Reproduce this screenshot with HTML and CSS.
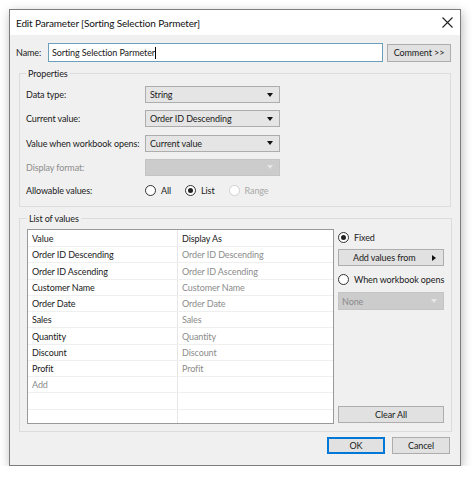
FILE: index.html
```html
<!DOCTYPE html>
<html lang="en">
<head>
  <meta charset="UTF-8">
  <title>Edit Parameter</title>
  <link rel="stylesheet" href="styles.css">
</head>
<body>
  <div class="window">
    <div class="titlebar">
      <span class="title">Edit Parameter [Sorting Selection Parmeter]</span>
      <svg class="close" width="11" height="11" viewBox="0 0 11 11">
        <path d="M0.5 0.5 L10.5 10.5 M10.5 0.5 L0.5 10.5" stroke="#222" stroke-width="1.1" fill="none"/>
      </svg>
    </div>

    <div class="body">
      <div class="name-row">
        <span class="name-label">Name:</span>
        <div class="name-input">Sorting Selection Parmeter<span class="caret"></span></div>
        <button class="btn comment-btn">Comment &gt;&gt;</button>
      </div>

      <fieldset class="group props">
        <legend>Properties</legend>
        <div class="prop-grid">
          <span class="lbl">Data type:</span>
          <div class="combo">String<i class="arrow"></i></div>

          <span class="lbl">Current value:</span>
          <div class="combo">Order ID Descending<i class="arrow"></i></div>

          <span class="lbl">Value when workbook opens:</span>
          <div class="combo">Current value<i class="arrow"></i></div>

          <span class="lbl disabled">Display format:</span>
          <div class="combo off"><i class="arrow"></i></div>

          <span class="lbl">Allowable values:</span>
          <div class="radios">
            <span class="radio"><i class="dot"></i>All</span>
            <span class="radio checked"><i class="dot"></i>List</span>
            <span class="radio off"><i class="dot"></i>Range</span>
          </div>
        </div>
      </fieldset>

      <fieldset class="group values">
        <legend>List of values</legend>
        <div class="values-body">
          <div class="table">
            <div class="row head"><span>Value</span><span>Display As</span></div>
            <div class="row"><span>Order ID Descending</span><span>Order ID Descending</span></div>
            <div class="row"><span>Order ID Ascending</span><span>Order ID Ascending</span></div>
            <div class="row"><span>Customer Name</span><span>Customer Name</span></div>
            <div class="row"><span>Order Date</span><span>Order Date</span></div>
            <div class="row"><span>Sales</span><span>Sales</span></div>
            <div class="row"><span>Quantity</span><span>Quantity</span></div>
            <div class="row"><span>Discount</span><span>Discount</span></div>
            <div class="row"><span>Profit</span><span>Profit</span></div>
            <div class="row add"><span>Add</span><span></span></div>
            <div class="row"><span></span><span></span></div>
            <div class="row last"><span></span><span></span></div>
          </div>

          <div class="side">
            <span class="radio checked"><i class="dot"></i>Fixed</span>
            <button class="btn add-btn">Add values from<i class="tri"></i></button>
            <span class="radio"><i class="dot"></i>When workbook opens</span>
            <div class="combo off">None<i class="arrow"></i></div>
            <button class="btn clear-btn">Clear All</button>
          </div>
        </div>
      </fieldset>

      <div class="footer">
        <button class="btn ok-btn">OK</button>
        <button class="btn">Cancel</button>
      </div>
    </div>
  </div>
</body>
</html>
```

FILE: styles.css
```css
* {
  box-sizing: border-box;
}

body {
  margin: 0;
  background: #fff;
  font-family: Lato, "Open Sans", sans-serif;
  font-size: 9px;
  letter-spacing: -0.1px;
  color: #1a1a1a;
  white-space: nowrap;
}

.window {
  margin: 9px 0 0 9px;
  width: 452px;
  height: 457px;
  border: 1px solid #7d7d7d;
  background: #f0f0f0;
  box-shadow: 1px 3px 10px rgba(0, 0, 0, 0.28);
  display: flex;
  flex-direction: column;
}

.titlebar {
  height: 25px;
  background: #fff;
  display: flex;
  align-items: center;
  justify-content: space-between;
  padding: 0 7px 0 6px;
  font-size: 10px;
  letter-spacing: -0.15px;
  color: #111;
}

.close {
  display: block;
}

.body {
  flex: 1;
  padding: 8px 9px 0 9px;
  display: flex;
  flex-direction: column;
}

.name-row {
  display: flex;
  align-items: center;
  height: 19px;
  margin-left: -3px;
}

.name-label {
  width: 32px;
}

.name-input {
  width: 335px;
  height: 19px;
  border: 1px solid #6b9fba;
  background: #fff;
  padding: 0 3px;
  display: flex;
  align-items: center;
}

.caret {
  display: inline-block;
  width: 1px;
  height: 12px;
  background: #000;
}

.btn {
  font: inherit;
  letter-spacing: inherit;
  color: #1a1a1a;
  background: #e1e1e1;
  border: 1px solid #adadad;
  padding: 0;
  height: 17px;
}

.comment-btn {
  margin-left: auto;
  width: 64px;
  height: 18px;
}

.group {
  margin: 0;
  border: 1px solid #dcdcdc;
  padding: 0 6px;
}

.group legend {
  padding: 0 2px;
  margin-left: 0;
}

.props {
  margin-top: 6px;
  padding-top: 7px;
  padding-bottom: 6px;
}

.prop-grid {
  display: grid;
  grid-template-columns: 119px 135px;
  grid-auto-rows: 17px;
  row-gap: 7.3px;
  align-items: center;
}

.lbl.disabled {
  color: #8d8d8d;
}

.combo {
  height: 17px;
  background: #e5e5e5;
  border: 1px solid #adadad;
  padding: 0 4px;
  display: flex;
  align-items: center;
  justify-content: space-between;
}

.combo.off {
  background: #cccccc;
  border-color: #c4c4c4;
  color: #8a8a8a;
}

.arrow {
  width: 0;
  height: 0;
  border-left: 3.5px solid transparent;
  border-right: 3.5px solid transparent;
  border-top: 4px solid #111;
  margin-left: auto;
  margin-right: 2px;
}

.combo.off .arrow {
  border-top-color: #e6e6e6;
}

.radios {
  display: flex;
  gap: 14px;
  margin-top: -3px;
}

.radio {
  display: flex;
  align-items: center;
  gap: 5px;
}

.radio .dot {
  width: 11px;
  height: 11px;
  border: 1px solid #333;
  border-radius: 50%;
  background: #fff;
  display: flex;
  align-items: center;
  justify-content: center;
}

.radio.checked .dot::after {
  content: "";
  width: 5px;
  height: 5px;
  border-radius: 50%;
  background: #222;
}

.radio.off {
  color: #a8a8a8;
}

.radio.off .dot {
  border-color: #d0d0d0;
}

.prop-grid .lbl:nth-last-child(2) {
  margin-top: -3px;
}

.values {
  margin-top: 6px;
  height: 219px;
  padding-top: 5px;
  padding-left: 7px;
}

.values-body {
  display: flex;
  gap: 4px;
}

.table {
  width: 307px;
  height: 195px;
  border: 1px solid #999;
  background: #fff;
  overflow: hidden;
}

.row {
  display: grid;
  grid-template-columns: 150px 1fr;
  height: 16.25px;
  border-bottom: 1px solid #efefef;
}

.row.head {
  height: 17px;
}

.row span {
  padding-left: 4px;
  display: flex;
  align-items: center;
}

.row span:first-child {
  border-right: 1px solid #e6e6e6;
}

.row span + span {
  color: #8c8c8c;
}

.row.head span + span {
  color: #1a1a1a;
}

.row.add span:first-child {
  color: #8c8c8c;
}

.side {
  width: 107px;
  display: flex;
  flex-direction: column;
}

.side .radio {
  height: 14px;
  margin-top: 1px;
}

.add-btn {
  margin-top: 5px;
  width: 106px;
  display: flex;
  align-items: center;
  padding-left: 14px;
  position: relative;
}

.tri {
  position: absolute;
  right: 7px;
  top: 5px;
  border-top: 3.5px solid transparent;
  border-bottom: 3.5px solid transparent;
  border-left: 4px solid #111;
}

.side .radio + .combo,
.add-btn + .radio {
  margin-top: 6px;
}

.side .combo {
  width: 106px;
  height: 18px;
  padding-left: 3px;
}

.clear-btn {
  margin-top: auto;
  width: 106px;
  height: 17px;
  margin-bottom: 1px;
}

.footer {
  display: flex;
  justify-content: flex-end;
  gap: 7px;
  margin-top: 5px;
  padding-right: 1px;
}

.footer .btn {
  width: 58px;
  height: 17px;
}

.ok-btn {
  border-color: #0078d7;
  box-shadow: inset 0 0 0 1px #0078d7;
}
```
